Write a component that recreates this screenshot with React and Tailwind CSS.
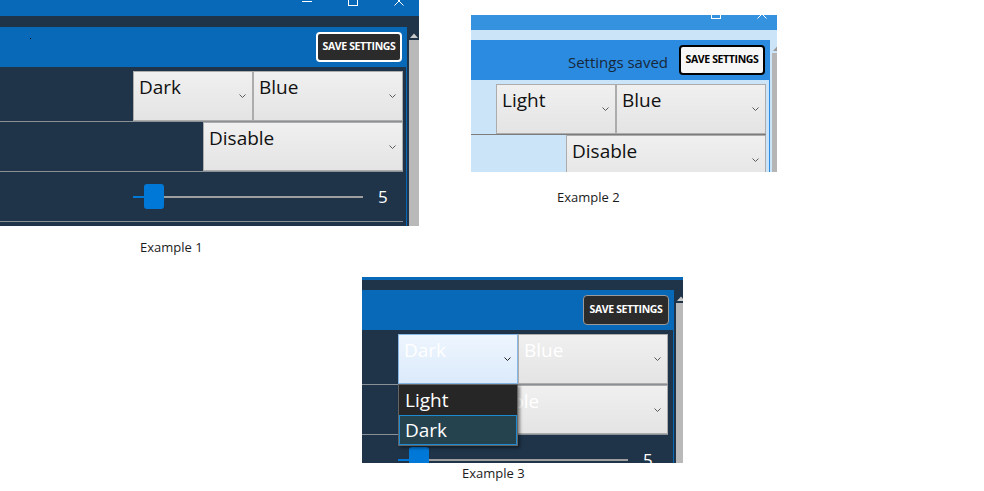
import React from 'react'

const themes = {
  dark: {
    title: 'bg-[#0869b9]',
    strip: 'bg-[#1f3449]',
    header: 'bg-[#0869b9]',
    body: 'bg-[#1f3449]',
    edge: 'border-r-[#0869b9]',
    line: 'border-b-[#8b9096]',
    arrow: '#c9c9c9',
    thumb: 'bg-[#b9b9b9]',
  },
  light: {
    title: 'bg-[#3592de]',
    strip: 'bg-[#cce4f7]',
    header: 'bg-[#2b8be0]',
    body: 'bg-[#cce4f7]',
    edge: 'border-r-[#2b8be0]',
    line: 'border-b-[#7c7c7c]',
    arrow: '#9a9a9a',
    thumb: 'bg-[#b5b5b5]',
  },
}

const buttons = {
  focused: 'border-2 border-white bg-[#2b2b2b] text-white',
  light: 'border-2 border-black bg-[#f7f7f7] text-black',
  plain: 'border border-[#9a9a9a] bg-[#2b2b2b] text-white',
}

function Chevron({ className }) {
  return (
    <svg width="7" height="4" viewBox="0 0 7 4" className={className}>
      <path d="M0.5 0.5 L3.5 3.5 L6.5 0.5" fill="none" stroke="currentColor" strokeWidth="1" />
    </svg>
  )
}

function Combo({ label, size, focused, whiteText, children }) {
  const box = focused
    ? 'border-[#86b7e6] bg-linear-to-b from-[#eef6fe] to-[#dbeafb]'
    : 'border-[#acacac] bg-linear-to-b from-[#f0f0f0] to-[#e4e4e4]'
  return (
    <div className={`relative flex shrink-0 items-start justify-between border ${box} ${size}`}>
      <span className={`pl-[5px] pt-[6px] text-[19px] leading-none ${whiteText ? 'text-white' : 'text-[#111]'}`}>
        {label}
      </span>
      <Chevron className={`mr-[6px] self-center ${focused ? 'text-[#222]' : 'text-[#5a5a5a]'}`} />
      {children}
    </div>
  )
}

function ThemeMenu() {
  // open list of the first combo (example 3)
  return (
    <div className="absolute left-[-1px] top-[49px] z-10 w-[120px] border border-[#646464] bg-[#262626] shadow-[2px_2px_3px_rgba(0,0,0,0.45)]">
      <div className="h-[30px] pl-[6px] pt-[6px] text-[19px] leading-none text-white">Light</div>
      <div className="h-[30px] border border-[#1d8ad2] bg-[#25434f] pl-[5px] pt-[5px] text-[19px] leading-none text-white">
        Dark
      </div>
    </div>
  )
}

function Caption({ lift }) {
  return (
    <div className={`-mr-[3px] flex h-[30px] shrink-0 ${lift}`}>
      <div className="flex w-[46px] items-center justify-center">
        <div className="h-px w-[10px] bg-white" />
      </div>
      <div className="flex w-[46px] items-center justify-center">
        <div className="h-[10px] w-[10px] border border-white" />
      </div>
      <div className="flex w-[46px] items-center justify-center">
        <svg width="10" height="10" viewBox="0 0 10 10">
          <path d="M0.5 0.5 L9.5 9.5 M9.5 0.5 L0.5 9.5" stroke="white" strokeWidth="1" />
        </svg>
      </div>
    </div>
  )
}

function ScrollBar({ t }) {
  return (
    <div className={`flex w-[12px] shrink-0 flex-col pl-[2px] ${t.body}`}>
      <div className="flex h-[13px] items-end justify-center pb-[2px]">
        <svg width="8" height="5" viewBox="0 0 8 5">
          <path d="M0 5 L4 0.5 L8 5 Z" fill={t.arrow} />
        </svg>
      </div>
      <div className={`flex-1 ${t.thumb}`} />
    </div>
  )
}

function SettingsWindow({ t, main, inset, titleH, stripH, lift, dot, saved, button, open, whiteText }) {
  return (
    <div className="flex flex-col">
      <div className={`flex justify-end overflow-hidden ${titleH} ${t.title}`}>{lift && <Caption lift={lift} />}</div>
      <div className={`${stripH} ${t.strip}`} />
      <div className="flex">
        <div className={`flex shrink-0 flex-col border-r pb-[12px] ${t.edge} ${t.body} ${main}`}>
          <header className={`flex h-[40px] items-center justify-end pr-[4px] ${t.header}`}>
            {dot && <span className="mb-[18px] ml-[30px] mr-auto h-px w-px bg-black" />}
            {saved && <span className="mr-[11px] pt-[5px] text-[15px] text-[#17283b]">Settings saved</span>}
            <button
              className={`h-[30px] w-[86px] rounded-[4px] text-[10.5px] font-bold tracking-[-0.035em] ${buttons[button]}`}
            >
              SAVE SETTINGS
            </button>
          </header>
          <div className={inset}>
            <div className={`flex justify-end border-b pt-[4px] ${t.line}`}>
              <Combo label={saved ? 'Light' : 'Dark'} size="w-[120px] h-[50px]" focused={open} whiteText={whiteText}>
                {open && <ThemeMenu />}
              </Combo>
              <Combo label="Blue" size="w-[150px] h-[50px]" whiteText={whiteText} />
            </div>
            <div className={`flex justify-end border-b ${t.line}`}>
              <Combo label="Disable" size="w-[200px] h-[49px]" whiteText={whiteText} />
            </div>
            <div className={`flex h-[50px] items-center justify-end border-b ${t.line}`}>
              <div className="flex h-[25px] w-[230px] items-center">
                <div className="h-[2px] w-[11px] bg-[#0078d7]" />
                <div className="h-[25px] w-[20px] rounded-[3px] bg-[#0078d7]" />
                <div className="h-[2px] flex-1 bg-[#9e9e9e]" />
              </div>
              <div className="w-[40px] pl-[15px] text-[17px] leading-none text-white">5</div>
            </div>
          </div>
        </div>
        <ScrollBar t={t} />
      </div>
    </div>
  )
}

export default function App() {
  return (
    <div className="relative h-[491px] w-[984px] overflow-hidden bg-white font-['Open_Sans','Noto_Sans',sans-serif]">
      {/* Example 1 */}
      <div className="absolute left-0 top-0 h-[226px] w-[419px] overflow-hidden">
        <div className="w-[419px]">
          <SettingsWindow
            t={themes.dark}
            main="w-[407px]"
            inset="mr-[3px]"
            titleH="h-[16px]"
            stripH="h-[11px]"
            lift="-mt-[14px]"
            dot
            button="focused"
          />
        </div>
      </div>
      <div className="absolute left-[140px] top-[238px] text-[13px] leading-[18px] text-[#1b1b1b]">Example 1</div>

      {/* Example 2 */}
      <div className="absolute left-[471px] top-[15px] h-[157px] w-[306px] overflow-hidden">
        <div className="w-[311px]">
          <SettingsWindow
            t={themes.light}
            main="w-[299px]"
            inset="mr-[3px]"
            titleH="h-[15px]"
            stripH="h-[10px]"
            lift="-mt-[16px]"
            saved
            button="light"
          />
        </div>
      </div>
      <div className="absolute left-[557px] top-[188px] text-[13px] leading-[18px] text-[#1b1b1b]">Example 2</div>

      {/* Example 3 */}
      <div className="absolute left-[362px] top-[277px] h-[186px] w-[321px] overflow-hidden">
        <div className="w-[324px]">
          <SettingsWindow
            t={themes.dark}
            main="w-[312px]"
            inset="mr-[5px]"
            titleH="h-[3px]"
            stripH="h-[10px]"
            button="plain"
            open
            whiteText
          />
        </div>
      </div>
      <div className="absolute left-[462px] top-[464px] text-[13px] leading-[18px] text-[#1b1b1b]">Example 3</div>
    </div>
  )
}
